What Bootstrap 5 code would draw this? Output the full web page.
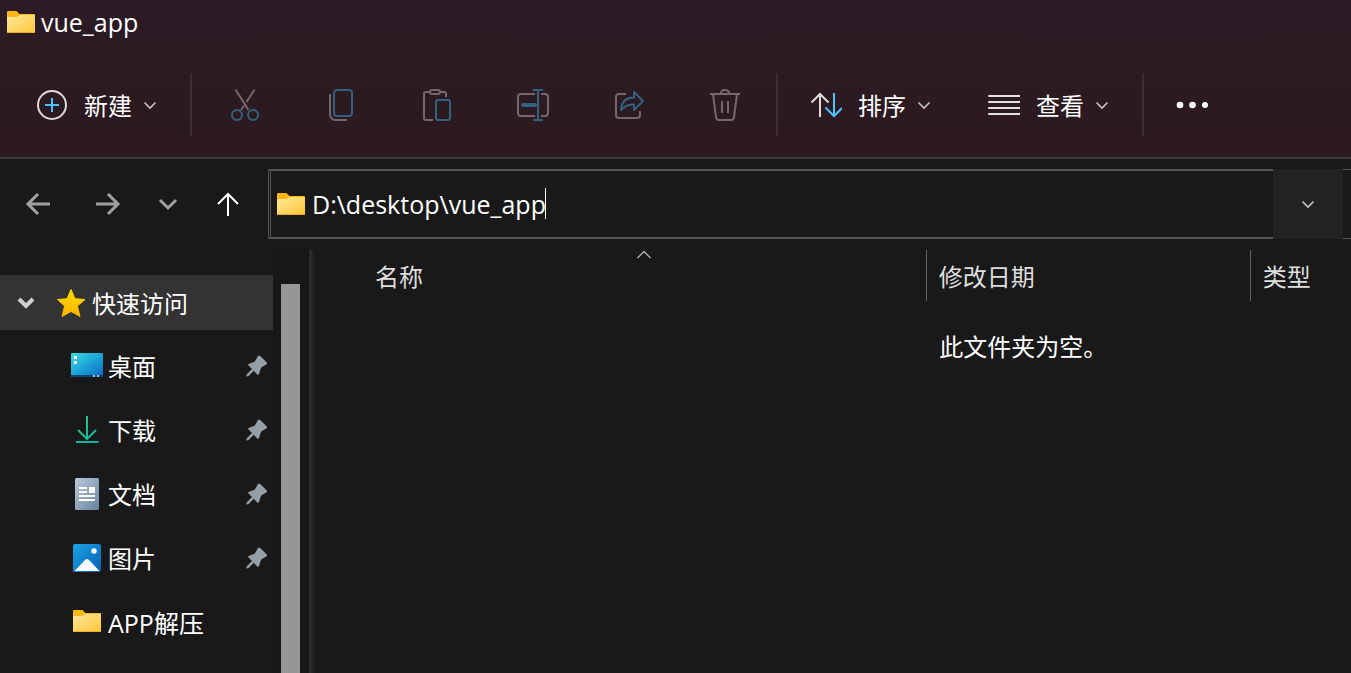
<!DOCTYPE html>
<html lang="zh-CN" data-bs-theme="dark">
<head>
<meta charset="utf-8">
<meta name="viewport" content="width=device-width, initial-scale=1">
<title>vue_app</title>
<link href="https://cdn.jsdelivr.net/npm/bootstrap@5.3.0/dist/css/bootstrap.min.css" rel="stylesheet">
<style>
  body { background: #191919; color: #fff; font-family: "Noto Sans", "Noto Sans CJK SC", sans-serif; font-size: 24px; line-height: 32px; }
  svg { display: block; flex: none; }
  button { font: inherit; }
  .latin { font-family: "Open Sans", "Noto Sans CJK SC", sans-serif; font-size: 25px; }
  .window-head { background: linear-gradient(#2b1b24, #2c1a1f); border-bottom: 2px solid #3a3a3a; }
  .window-title { height: 44px; padding-left: 7px; gap: 6px; }
  .command-bar { height: 105px; padding-left: 8px; }
  .cmd { color: #fff; background: none; border: 0; padding: 0 29px 0 28px; height: 64px; display: flex; align-items: center; }
  .cmd-label { margin: 3px 11px 0 16px; }
  .cmd-icon { width: 96px; padding: 0; justify-content: center; }
  .bar-line { width: 2px; height: 63px; margin: 0 4px; background: #3f2d34; }
  .nav-row { padding: 10px 0 11px; }
  .nav-buttons { width: 268px; padding-left: 8px; }
  .nav-btn { background: none; border: 0; padding: 0; width: 60px; height: 60px; display: flex; align-items: center; justify-content: center; }
  .nav-wide { width: 80px; }
  .nav-narrow { width: 40px; }
  .address { height: 70px; border: 1px solid #555; border-right: 0; padding: 0 8px 0 1px; }
  .address-field { border: 1px solid #555; border-right: 0; padding-left: 6px; gap: 7px; }
  .address-field input { width: 100%; height: 48px; padding: 0; border: 0; outline: 0; background: none; color: #fff; }
  .caret-line { position: absolute; left: 233px; top: 8px; width: 1px; height: 31px; background: #fff; }
  .history-btn { width: 70px; margin: -1px 0; border: 0; background: #232323; }
  .side-list { width: 273px; padding-top: 20px; }
  .side-item { height: 64px; color: #fff; padding: 0 5px 0 70px; gap: 5px; }
  .side-item span { flex: 1; margin-top: 2px; }
  .side-head { height: 55px; margin: 5px 0 4px; padding: 0 16px; gap: 5px; background: #333; color: #fff; }
  .side-head span { margin-top: 2px; }
  .scroll-track { width: 36px; background: #171717; padding: 34px 9px 0 8px; }
  .scroll-thumb { background: #969696; height: 100%; }
  .splitter { width: 6px; background: #202020; border-left: 3px solid #2b2b2b; }
  .files { table-layout: fixed; width: 100%; }
  .files th { position: relative; height: 51px; font-weight: 400; color: #dedede; padding: 3px 0 0 12px; border-left: 1px solid #636363; }
  .files th:first-child { padding-left: 60px; border: 0; }
  .files td { padding: 30px 0 0 13px; }
  .col-name { width: 59%; }
  .col-date { width: 324px; }
  .sort-mark { position: absolute; top: 0; left: 50%; margin-left: 16px; }
</style>
</head>
<body class="vh-100 overflow-hidden d-flex flex-column">
<svg width="0" height="0" class="position-absolute" aria-hidden="true">
  <defs>
    <linearGradient id="gFolder" x1="0" y1="0" x2="1" y2="1"><stop offset="0" stop-color="#ffe79c"/><stop offset="1" stop-color="#ffc737"/></linearGradient>
    <linearGradient id="gStar" x1="0" y1="0" x2="0" y2="1"><stop offset="0" stop-color="#ffdc00"/><stop offset="1" stop-color="#ffb300"/></linearGradient>
    <linearGradient id="gDesk" x1="0" y1="0" x2="1" y2="1"><stop offset="0" stop-color="#35dfe8"/><stop offset="1" stop-color="#0868c4"/></linearGradient>
    <linearGradient id="gDown" gradientUnits="userSpaceOnUse" x1="6" y1="3" x2="28" y2="30"><stop offset="0" stop-color="#2fc979"/><stop offset="1" stop-color="#0fb0aa"/></linearGradient>
    <linearGradient id="gDoc" x1="0" y1="0" x2="1" y2="1"><stop offset="0" stop-color="#b9c9da"/><stop offset="1" stop-color="#67829f"/></linearGradient>
    <linearGradient id="gPic" x1="0" y1="0" x2="1" y2="1"><stop offset="0" stop-color="#19a5e6"/><stop offset="1" stop-color="#0760b5"/></linearGradient>
    <symbol id="folder" viewBox="0 0 28 22"><path d="M0 1.2Q0 0 1.2 0H9.5L12.5 3H27Q28 3 28 4V10H0Z" fill="#fdb813"/><path d="M0 6H9.6L12.6 4H28V21Q28 22 27 22H1Q0 22 0 21Z" fill="url(#gFolder)"/><path d="M0 20.5Q0 22 1 22H27Q28 22 28 20.5L27.5 21.2H.5Z" fill="#eda31c"/></symbol>
    <symbol id="pin" viewBox="0 0 22 22"><path d="M12.2.8Q13.2.2 14.2 1L20.6 7.2Q21.6 8.3 20.6 9.2L15 12.8 13.2 18.5Q12.5 20.4 11.2 19.4L7.8 15.8 2.3 21.2 .4 21.4 .6 19.4 6 14 2.5 10.6Q1.6 9.5 3 8.8L8.6 6.8Z" fill="#949fa6"/></symbol>
    <symbol id="chev" viewBox="0 0 14 14"><path d="M1.5 4.5 7 10 12.500 4.500" fill="none" stroke="#c9c3c5" stroke-width="1.600"/></symbol>
  </defs>
</svg>

<header class="window-head">
  <div class="window-title d-flex align-items-center mb-2">
    <svg width="28" height="22"><use href="#folder"/></svg>
    <span class="latin">vue_app</span>
  </div>
  <div class="command-bar d-flex align-items-center">
    <button type="button" class="cmd">
      <svg width="32" height="32" viewBox="0 0 32 32" fill="none" stroke-width="2"><circle cx="16" cy="16" r="14" stroke="#dfdadc"/><path d="M16 9V23M9 16H23" stroke="#4cc2ff"/></svg>
      <span class="cmd-label">新建</span><svg width="14" height="14"><use href="#chev"/></svg>
    </button>
    <div class="bar-line"></div>
    <button type="button" class="cmd cmd-icon" aria-label="剪切">
      <svg width="32" height="34" viewBox="0 0 32 34" fill="none" stroke-width="2"><path d="M7.500 1.500 20.500 22M26.500 1.500 18.500 14M16 17.500 13 22" stroke="#76666d"/><circle cx="9" cy="27" r="5" stroke="#34607f"/><circle cx="25" cy="27" r="5" stroke="#34607f"/></svg>
    </button>
    <button type="button" class="cmd cmd-icon" aria-label="复制">
      <svg width="32" height="34" viewBox="0 0 32 34" fill="none" stroke-width="2"><path d="M6 6V26Q6 32 12 32H23" stroke="#76666d"/><rect x="10" y="2" width="18" height="26" rx="3" stroke="#34607f"/></svg>
    </button>
    <button type="button" class="cmd cmd-icon" aria-label="粘贴">
      <svg width="32" height="34" viewBox="0 0 32 34" fill="none" stroke-width="2"><path d="M10 4H6Q4 4 4 6V30Q4 32 6 32H13M20 4H24Q26 4 26 6V9" stroke="#76666d"/><rect x="10" y="2" width="10" height="4" rx="2" stroke="#76666d"/><rect x="16" y="12" width="14" height="20" rx="2" stroke="#34607f"/></svg>
    </button>
    <button type="button" class="cmd cmd-icon" aria-label="重命名">
      <svg width="34" height="34" viewBox="-1 0 34 34" fill="none" stroke-width="2"><path d="M19 6H5Q2 6 2 9V25Q2 28 5 28H19M25 6H29Q32 6 32 9V25Q32 28 29 28H25" stroke="#76666d"/><path d="M22 2V32M17 2H27M17 32H27" stroke="#34607f"/><path d="M7 17H19" stroke="#34607f" stroke-width="4" stroke-linecap="round"/></svg>
    </button>
    <button type="button" class="cmd cmd-icon" aria-label="共享">
      <svg width="32" height="34" viewBox="-1 0 32 34" fill="none" stroke-width="2" stroke-linejoin="round"><path d="M13 6H6Q3 6 3 9V27Q3 30 6 30H24Q27 30 27 27V23" stroke="#76666d"/><path d="M21 4 30 13 21 22V16.500C15 16.500 11 18.500 8 22 8.500 14 13 9.500 21 9.500Z" stroke="#34607f"/></svg>
    </button>
    <button type="button" class="cmd cmd-icon" aria-label="删除">
      <svg width="32" height="34" viewBox="-1 0 32 34" fill="none" stroke="#76666d" stroke-width="2"><path d="M1 6H31M11.500 6Q12 2 16 2T20.500 6M4 6 7 29Q7.500 32 10 32H22Q24.500 32 25 29L28 6M13 13V25M19 13V25"/></svg>
    </button>
    <div class="bar-line"></div>
    <button type="button" class="cmd">
      <svg width="32" height="32" viewBox="0 0 32 32" fill="none" stroke-width="2"><path d="M10 28V5M1.500 13.500 10 5 18.500 13.500" stroke="#dfdadc"/><path d="M24 4V27M15.500 18.500 24 27 32 19" stroke="#4cc2ff"/></svg>
      <span class="cmd-label">排序</span><svg width="14" height="14"><use href="#chev"/></svg>
    </button>
    <button type="button" class="cmd">
      <svg width="32" height="32" viewBox="0 0 32 32"><path d="M1 7H32M1 13H32M1 19H32M1 25H32" stroke="#e5e1e2" stroke-width="2" stroke-linecap="round"/></svg>
      <span class="cmd-label">查看</span><svg width="14" height="14"><use href="#chev"/></svg>
    </button>
    <div class="bar-line"></div>
    <button type="button" class="cmd" aria-label="更多">
      <svg width="32" height="8" viewBox="0 0 32 8" fill="#fff"><circle cx="4" cy="4" r="3.300"/><circle cx="16.500" cy="4" r="3.300"/><circle cx="29" cy="4" r="3"/></svg>
    </button>
  </div>
</header>

<div class="nav-row d-flex align-items-center">
  <nav class="nav-buttons d-flex flex-shrink-0" aria-label="导航">
    <button type="button" class="nav-btn" aria-label="后退"><svg width="26" height="26" viewBox="0 0 26 26" fill="none" stroke="#a0a0a0" stroke-width="3"><path d="M25 13H3M13 3 3 13 13 23"/></svg></button>
    <button type="button" class="nav-btn nav-wide" aria-label="前进"><svg width="26" height="26" viewBox="0 0 26 26" fill="none" stroke="#a0a0a0" stroke-width="3"><path d="M1 13H23M13 3 23 13 13 23"/></svg></button>
    <button type="button" class="nav-btn nav-narrow" aria-label="最近位置"><svg width="20" height="20" viewBox="0 0 20 20" fill="none" stroke="#a0a0a0" stroke-width="3"><path d="M2 6 10 14 18 6"/></svg></button>
    <button type="button" class="nav-btn nav-wide" aria-label="上移"><svg width="24" height="26" viewBox="0 0 24 26" fill="none" stroke="#fff" stroke-width="2"><path d="M12 25V3M2 13 12 3 22 13"/></svg></button>
  </nav>
  <div class="address d-flex flex-fill">
    <div class="address-field d-flex align-items-center flex-fill">
      <svg width="28" height="22"><use href="#folder"/></svg>
      <div class="position-relative flex-fill">
        <input class="latin d-block" type="text" value="D:\desktop\vue_app" aria-label="地址">
        <span class="caret-line"></span>
      </div>
    </div>
    <button type="button" class="history-btn d-flex align-items-center justify-content-center" aria-label="历史记录"><svg width="14" height="14"><use href="#chev"/></svg></button>
  </div>
</div>

<div class="d-flex flex-fill overflow-hidden">
  <aside class="side-list flex-shrink-0">
    <a href="#" class="side-head d-flex align-items-center text-decoration-none">
      <svg width="20" height="20" viewBox="0 0 20 20" fill="none" stroke="#cfcfcf" stroke-width="4"><path d="M3 6 10 13 17 6"/></svg>
      <svg class="ms-3" width="30" height="30" viewBox="1 0 30 30"><path d="M15 1.500 19 10.700 29 11.500 21.400 18 24 28.500 15 23.500 6 28.500 8.600 18 1.500 11.500 11 10.700Z" fill="url(#gStar)" stroke="url(#gStar)" stroke-linejoin="round"/></svg>
      <span>快速访问</span>
    </a>
    <a href="#" class="side-item d-flex align-items-center text-decoration-none">
      <svg width="33" height="34" viewBox="0 0 33 34"><rect x="1" y="4" width="32" height="24" rx="1" fill="url(#gDesk)"/><path d="M1 26H33V27Q33 28 32 28H2Q1 28 1 27Z" fill="#0b4a74"/><path d="M4 7H7V10H4ZM4 12H7V15H4Z" fill="#fff"/><path d="M23 26H25V28H23ZM27 26H29V28H27Z" fill="#9ec5e6"/></svg>
      <span>桌面</span><svg width="22" height="22"><use href="#pin"/></svg>
    </a>
    <a href="#" class="side-item d-flex align-items-center text-decoration-none">
      <svg width="33" height="34" viewBox="0 0 33 34" fill="none" stroke="url(#gDown)" stroke-width="2"><path d="M17 3V25M8 17 17 26 26 17M6 29H28V29.010"/></svg>
      <span>下载</span><svg width="22" height="22"><use href="#pin"/></svg>
    </a>
    <a href="#" class="side-item d-flex align-items-center text-decoration-none">
      <svg width="33" height="34" viewBox="0 0 33 34"><rect x="5" y="1" width="24" height="32" rx="1.500" fill="url(#gDoc)"/><path d="M9 10H17V12H9ZM9 14H17V16H9ZM19 10H25V16H19ZM9 18H25V20H9ZM9 22H25V24H9Z" fill="#fff"/></svg>
      <span>文档</span><svg width="22" height="22"><use href="#pin"/></svg>
    </a>
    <a href="#" class="side-item d-flex align-items-center text-decoration-none">
      <svg width="33" height="34" viewBox="0 0 33 34"><rect x="3" y="3" width="28" height="28" rx="2" fill="url(#gPic)"/><path d="M4.500 30 15 19Q17 17 19 19L29.500 30Z" fill="#f3f9ff"/><circle cx="24" cy="10" r="2.700" fill="#fff"/></svg>
      <span>图片</span><svg width="22" height="22"><use href="#pin"/></svg>
    </a>
    <a href="#" class="side-item d-flex align-items-center text-decoration-none">
      <svg width="33" height="34" viewBox="0 0 33 34"><use href="#folder" x="3" y="5" width="28" height="22"/></svg>
      <span class="latin">APP解压</span>
    </a>
  </aside>
  <div class="scroll-track flex-shrink-0"><div class="scroll-thumb"></div></div>
  <div class="splitter flex-shrink-0"></div>
  <main class="flex-fill">
    <table class="files">
      <colgroup><col class="col-name"><col class="col-date"><col></colgroup>
      <thead><tr>
        <th scope="col">名称<svg class="sort-mark" width="16" height="10" viewBox="0 0 16 10" fill="none" stroke="#b5b5b5" stroke-width="1.300"><path d="M1.500 8 8 1.500 14.500 8"/></svg></th>
        <th scope="col">修改日期</th>
        <th scope="col">类型</th>
      </tr></thead>
      <tbody><tr><td></td><td colspan="2">此文件夹为空。</td></tr></tbody>
    </table>
  </main>
</div>
<script src="https://cdn.jsdelivr.net/npm/bootstrap@5.3.0/dist/js/bootstrap.bundle.min.js"></script>
</body>
</html>
